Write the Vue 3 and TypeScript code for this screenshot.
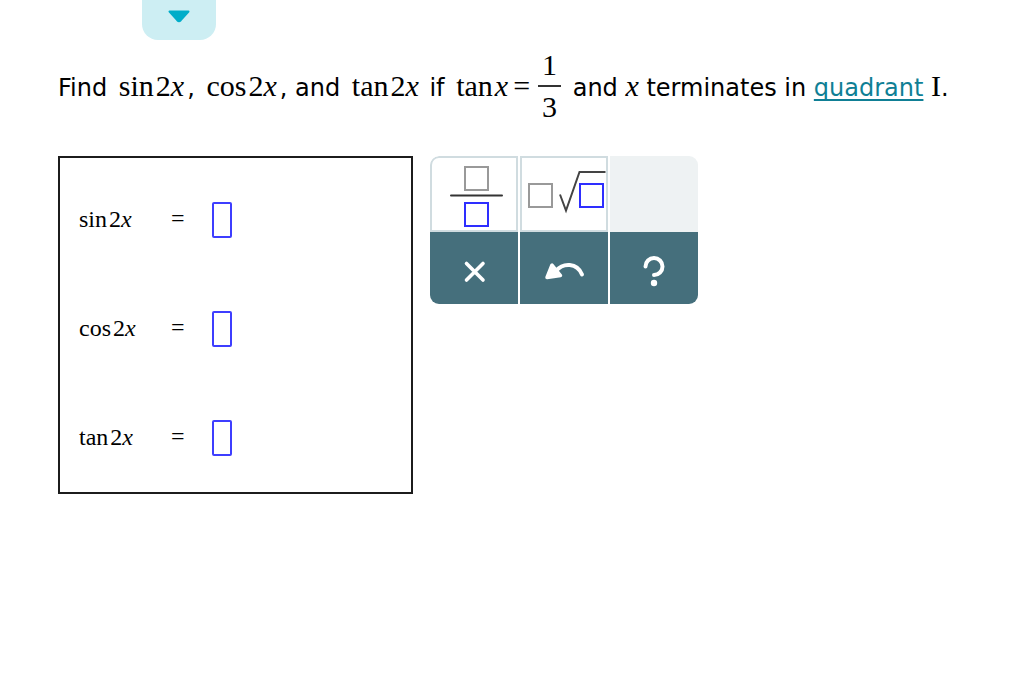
<script setup lang="ts">
import { ref } from 'vue'

interface Row {
  id: string
  fn: string
}

const rows: Row[] = [
  { id: 'sin', fn: 'sin' },
  { id: 'cos', fn: 'cos' },
  { id: 'tan', fn: 'tan' },
]

const answers = ref<Record<string, string>>({ sin: '', cos: '', tan: '' })

function clearAll(): void {
  answers.value = { sin: '', cos: '', tan: '' }
}
</script>

<template>
  <main class="page">
    <button class="tab" type="button" aria-label="Expand">
      <svg width="24" height="16" viewBox="0 0 24 16" aria-hidden="true">
        <path d="M2.500 3.500H21.500L13.800 12.200Q12 14 10.200 12.200Z" fill="#00adc9" stroke="#00adc9" stroke-width="2" stroke-linejoin="round" />
      </svg>
    </button>

    <p class="question">
      Find <span class="math lead">sin<span class="arg">2<i>x</i></span></span>,
      <span class="math lead">cos<span class="arg">2<i>x</i></span></span>, and
      <span class="math lead">tan<span class="arg">2<i>x</i></span></span> if
      <span class="math lead">tan<i class="arg">x</i><span class="eq">=</span></span><span class="math fraction"><span class="num">1</span><span class="den">3</span></span>
      and <i class="math">x</i> terminates in <a href="#quadrant">quadrant</a> <span class="math">I</span>.
    </p>

    <div class="work">
      <form class="answers" @submit.prevent>
        <div v-for="row in rows" :key="row.id" class="row">
          <label :for="row.id">{{ row.fn }}<span class="arg">2<i>x</i></span></label>
          <span class="equals">=</span>
          <input :id="row.id" v-model="answers[row.id]" type="text" autocomplete="off" />
        </div>
      </form>

      <div class="keypad">
        <button class="key light first" type="button" aria-label="Fraction">
          <svg width="84" height="72" viewBox="0 0 84 72" fill="none" stroke-width="2" aria-hidden="true">
            <rect x="33" y="9" width="23" height="23" stroke="#999" />
            <path d="M19 37.500H70" stroke="#333" stroke-linecap="round" />
            <rect x="33" y="45" width="23" height="23" stroke="#2e2eff" />
          </svg>
        </button>
        <button class="key light" type="button" aria-label="Square root">
          <svg width="84" height="72" viewBox="0 0 84 72" fill="none" stroke-width="2" aria-hidden="true">
            <rect x="7" y="26" width="23" height="23" stroke="#999" />
            <path d="M38 36.500L44 52.500L57.500 14H83.500" stroke="#444" />
            <rect x="58" y="26" width="23" height="23" stroke="#2e2eff" />
          </svg>
        </button>
        <div class="blank"></div>
        <button class="key dark" type="button" aria-label="Clear" @click="clearAll">
          <svg width="88" height="72" viewBox="0 0 88 72" fill="none" stroke="#fff" stroke-width="3.600" stroke-linecap="round" aria-hidden="true">
            <path d="M36.500 31.500L53 48M53 31.500L36.500 48" />
          </svg>
        </button>
        <button class="key dark" type="button" aria-label="Undo">
          <svg width="88" height="72" viewBox="0 0 88 72" fill="none" aria-hidden="true">
            <path d="M36 39C43 30.500 57 30.500 62 42.500" stroke="#fff" stroke-width="4" stroke-linecap="round" />
            <path d="M32 33L27 45.500L40.500 43.500Z" fill="#fff" stroke="#fff" stroke-width="3.500" stroke-linejoin="round" />
          </svg>
        </button>
        <button class="key dark" type="button" aria-label="Help">
          <svg width="88" height="72" viewBox="0 0 88 72" fill="none" aria-hidden="true">
            <path d="M35.500 34.500A8.500 8.500 0 1 1 44 43" stroke="#fff" stroke-width="4" stroke-linecap="round" />
            <circle cx="44" cy="51" r="3.200" fill="#fff" />
          </svg>
        </button>
      </div>
    </div>
  </main>
</template>

<style>
body {
  background: #fff;
}
</style>

<style scoped>
.page {
  padding: 0 58px;
  font-family: "DejaVu Sans", sans-serif;
  font-size: 24px;
  color: #000;
}

button {
  display: flex;
  align-items: center;
  justify-content: center;
  padding: 0;
  border: 0;
  cursor: pointer;
}

svg {
  display: block;
}

.tab {
  width: 74px;
  height: 40px;
  margin-left: 84px;
  padding-bottom: 8px;
  border-radius: 0 0 16px 16px;
  background: #cdeef3;
}

.question {
  margin: 5px 0 29px;
  line-height: 32px;
}

.math {
  font-family: "Liberation Serif", serif;
  font-size: 30px;
}

.lead {
  margin-left: 4px;
  white-space: nowrap;
}

.arg {
  margin-left: 2px;
}

.question .arg {
  margin-right: 3px;
}

.eq {
  margin-left: 2px;
}

.fraction {
  display: inline-flex;
  flex-direction: column;
  margin: 0 4px 0 8px;
  text-align: center;
  vertical-align: 21px;
}

.num,
.den {
  padding: 0 4px;
  line-height: 40px;
}

.den {
  border-top: 2px solid #333;
}

a {
  color: #0f7f95;
  text-decoration-thickness: 2px;
  text-underline-offset: 3px;
  text-decoration-skip-ink: none;
}

.work {
  display: flex;
  flex-wrap: wrap;
  align-items: flex-start;
  gap: 17px;
}

.answers {
  box-sizing: border-box;
  flex: 0 1 355px;
  padding: 7px 19px 0;
  border: 2px solid #1c1c1c;
  font-family: "Liberation Serif", serif;
}

.row {
  display: grid;
  grid-template-columns: 92px 41px 20px;
  align-items: center;
  height: 109px;
}

.equals {
  padding-bottom: 4px;
  line-height: 32px;
}

input {
  box-sizing: border-box;
  width: 20px;
  height: 36px;
  padding: 0;
  border: 2px solid #3e3eff;
  border-radius: 2px;
  outline: 0;
  background: #fff;
  font: inherit;
}

.keypad {
  display: grid;
  grid-template-columns: repeat(3, 1fr);
  column-gap: 2px;
  flex: 0 1 268px;
  border-radius: 9px;
  overflow: hidden;
}

.key,
.blank {
  box-sizing: border-box;
  min-width: 0;
}

.light {
  height: 76px;
  border: 2px solid #d0dce0;
  background: #fff;
}

.first {
  border-top-left-radius: 9px;
}

.blank {
  background: #eef2f3;
}

.dark {
  height: 72px;
  background: #456f7c;
}
</style>
